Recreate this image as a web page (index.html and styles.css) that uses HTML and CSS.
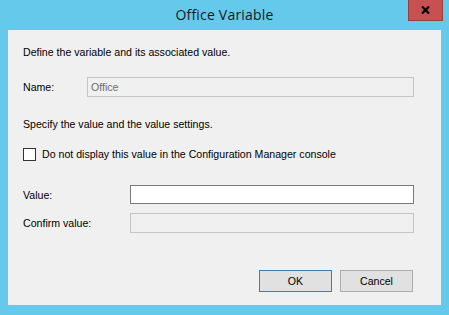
FILE: index.html
```
<!DOCTYPE html>
<html>
<head>
<meta charset="utf-8">
<link rel="stylesheet" href="styles.css">
</head>
<body>
<div class="window">
  <div class="titlebar">
    <div class="spacer"></div>
    <div class="title">Office Variable</div>
    <div class="controls">
      <div class="close">
        <svg width="9" height="8" viewBox="0 0 9 8"><path d="M1 0.5 L8 7.5 M8 0.5 L1 7.5" stroke="#000" stroke-width="2.2"/></svg>
      </div>
    </div>
  </div>
  <div class="client">
    <div class="line first">Define the variable and its associated value.</div>
    <div class="row name-row">
      <div class="label name-label">Name:</div>
      <div class="field disabled"><span class="field-text">Office</span></div>
    </div>
    <div class="line specify">Specify the value and the value settings.</div>
    <div class="check-row">
      <div class="checkbox"></div>
      <div class="check-label">Do not display this value in the Configuration Manager console</div>
    </div>
    <div class="row value-row">
      <div class="label value-label">Value:</div>
      <div class="field active"></div>
    </div>
    <div class="row confirm-row">
      <div class="label value-label">Confirm value:</div>
      <div class="field disabled"></div>
    </div>
    <div class="buttons">
      <div class="btn default">OK</div>
      <div class="btn">Cancel</div>
    </div>
  </div>
</div>
</body>
</html>
```
FILE: styles.css
```
html, body {
  margin: 0;
  padding: 0;
}
body {
  width: 449px;
  height: 315px;
  overflow: hidden;
  font-family: "Liberation Sans", Arial, sans-serif;
  font-size: 10.6px;
  color: #000;
}
.window {
  width: 449px;
  height: 315px;
  background: #65c9eb;
  display: flex;
  flex-direction: column;
}
.titlebar {
  height: 30px;
  display: grid;
  grid-template-columns: 1fr auto 1fr;
}
.title {
  font-family: "Open Sans", "Noto Sans", sans-serif;
  font-size: 14px;
  color: #1a1a1a;
  line-height: 30px;
  letter-spacing: 0.2px;
}
.controls {
  display: flex;
  justify-content: flex-end;
  padding-right: 6px;
}
.close {
  width: 33px;
  height: 20px;
  background: #c75050;
  border: 1px solid #9a3f3f;
  border-top: none;
  display: flex;
  align-items: center;
  justify-content: center;
}
.client {
  margin: 0 8px;
  height: 275px;
  background: #f0f0f0;
  padding: 0 27px 0 15px;
  box-sizing: border-box;
  display: flex;
  flex-direction: column;
}
.line {
  height: 18px;
  line-height: 18px;
}
.first { margin-top: 13px; }
.row {
  display: flex;
  align-items: center;
}
.label {
  flex: none;
}
.name-label { width: 64px; }
.value-label { width: 107px; }
.field {
  flex: 1;
  box-sizing: border-box;
  height: 20px;
  border: 1px solid #c6c6c6;
  display: flex;
  align-items: center;
  padding-left: 3px;
}
.field.disabled { background: #f0f0f0; }
.field.active { background: #fff; border-color: #7a7a7a; height: 19px; }
.field-text { color: #6d6d6d; }
.name-row { margin-top: 16px; }
.specify { margin-top: 18px; }
.check-row {
  margin-top: 14px;
  display: flex;
  align-items: center;
  height: 14px;
}
.checkbox {
  width: 13px;
  height: 13px;
  box-sizing: border-box;
  border: 1px solid #333;
  background: #fff;
  margin-right: 6px;
}
.value-row { margin-top: 24px; }
.confirm-row { margin-top: 9px; }
.buttons {
  margin-top: 37px;
  display: flex;
  justify-content: flex-end;
  gap: 8px;
  padding-right: 1px;
}
.btn {
  width: 73px;
  height: 22px;
  box-sizing: border-box;
  background: #e1e1e1;
  border: 1px solid #adadad;
  display: flex;
  align-items: center;
  justify-content: center;
}
.btn.default { border-color: #3c7fb1; }
```
